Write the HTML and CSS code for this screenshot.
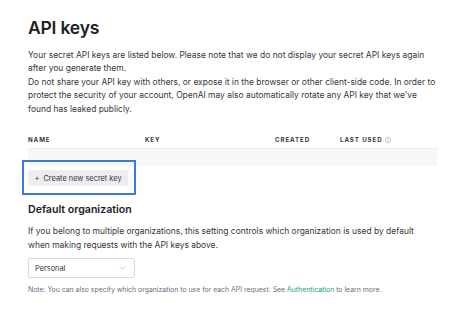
FILE: index.html
```html
<!DOCTYPE html>
<html lang="en">
<head>
    <meta charset="UTF-8">
    <meta name="viewport" content="width=device-width, initial-scale=1.0">
    <title>API keys</title>
    <link rel="stylesheet" href="styles.css">
</head>
<body>
    <div class="page">
        <h1>API keys</h1>
        <p>Your secret API keys are listed below. Please note that we do not display your secret API keys again after you generate them.</p>
        <p>Do not share your API key with others, or expose it in the browser or other client-side code. In order to protect the security of your account, OpenAI may also automatically rotate any API key that we've found has leaked publicly.</p>

        <div class="keys-table">
            <div class="keys-head">
                <span>NAME</span>
                <span>KEY</span>
                <span>CREATED</span>
                <span class="last-used">LAST USED
                    <svg class="info" viewBox="0 0 10 10" width="6" height="6">
                        <circle cx="5" cy="5" r="4.3" fill="none" stroke="#8e8ea0" stroke-width="0.9"/>
                        <line x1="5" y1="4.4" x2="5" y2="7.2" stroke="#8e8ea0" stroke-width="0.9"/>
                        <circle cx="5" cy="3" r="0.5" fill="#8e8ea0"/>
                    </svg>
                </span>
            </div>
            <div class="keys-row"></div>
        </div>

        <div class="create-wrap">
            <button class="create-btn">+&nbsp; Create new secret key</button>
            <div class="highlight"></div>
        </div>

        <h2>Default organization</h2>
        <p class="org-text">If you belong to multiple organizations, this setting controls which organization is used by default when making requests with the API keys above.</p>

        <div class="select">
            <span>Personal</span>
            <svg viewBox="0 0 10 6" width="7" height="4">
                <polyline points="1,1 5,5 9,1" fill="none" stroke="#b4b4c0" stroke-width="1"/>
            </svg>
        </div>

        <p class="note">Note: You can also specify which organization to use for each API request. See <a href="#">Authentication</a> to learn more.</p>
    </div>
</body>
</html>
```

FILE: styles.css
```css
body {
    font-family: Inter, 'Liberation Sans', sans-serif;
    background-color: #fff;
    color: #353740;
    margin: 0;
    padding: 0;
}

.page {
    width: 409px;
    padding: 17px 0 0 28px;
}

h1 {
    font-size: 17.5px;
    font-weight: 600;
    color: #202123;
    margin: 0 0 10px 0;
    line-height: 22px;
    letter-spacing: -0.2px;
}

p {
    font-size: 8.45px;
    line-height: 13.4px;
    margin: 0;
}

.keys-table {
    margin-top: 16px;
    width: 409px;
}

.keys-head {
    display: grid;
    grid-template-columns: 117px 130px 65px 1fr;
    font-size: 6.2px;
    font-weight: 700;
    letter-spacing: 0.9px;
    color: #353740;
    height: 16px;
    line-height: 16px;
    border-bottom: 1px solid #ececf1;
}

.last-used {
    display: flex;
    align-items: center;
    gap: 2px;
}

.keys-row {
    height: 17px;
    background-color: #f7f7f8;
}

.create-wrap {
    position: relative;
    margin-top: 4px;
    width: 100px;
}

.create-btn {
    display: block;
    width: 100px;
    height: 16px;
    border: none;
    border-radius: 2px;
    background-color: #ececf1;
    color: #353740;
    font-family: Inter, 'Liberation Sans', sans-serif;
    font-size: 7.4px;
    padding: 0;
    cursor: pointer;
}

.highlight {
    position: absolute;
    left: -6px;
    top: -10px;
    width: 110px;
    height: 31px;
    border: 2px solid #3a7bd5;
}

h2 {
    font-size: 10.6px;
    font-weight: 600;
    color: #202123;
    margin: 16px 0 0 0;
    line-height: 16px;
}

.org-text {
    max-width: 395px;
    margin-top: 6px;
    line-height: 14px;
}

.select {
    display: flex;
    justify-content: space-between;
    align-items: center;
    box-sizing: border-box;
    width: 107px;
    height: 20px;
    margin-top: 6px;
    padding: 0 8px 0 6px;
    border: 1px solid #d9d9e3;
    border-radius: 2px;
    font-size: 7.4px;
}

.note {
    font-size: 6.9px;
    color: #6e6e80;
    margin-top: 6px;
    line-height: 12px;
}

.note a {
    color: #10a37f;
    text-decoration: none;
}
```
